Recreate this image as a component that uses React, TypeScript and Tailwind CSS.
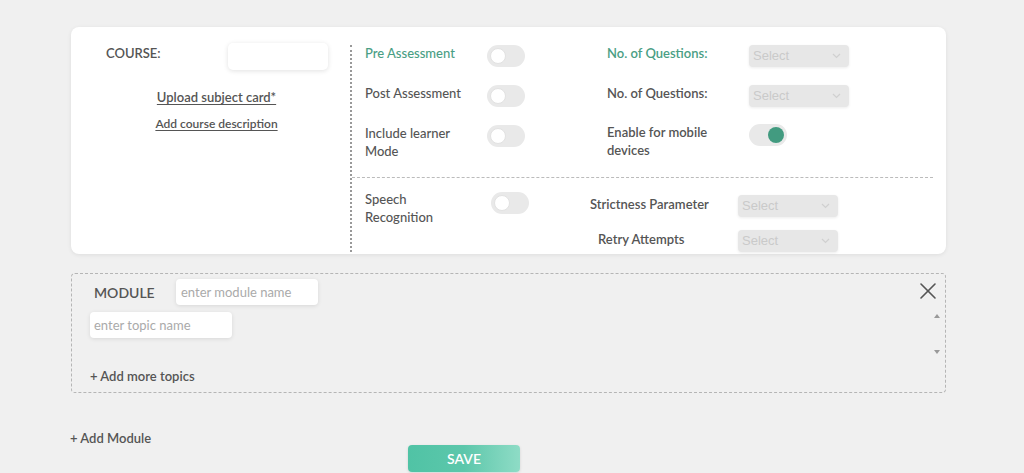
import { X } from "lucide-react";

function Toggle({ on = false }: { on?: boolean }) {
  return (
    <div className="flex h-[22px] w-[38px] shrink-0 items-center rounded-full bg-[#e9e9e9] px-[3px]">
      {on ? (
        <span className="ml-auto h-[16px] w-[16px] rounded-full bg-[#429b80]" />
      ) : (
        <span className="h-[16px] w-[16px] rounded-full border border-[#e2e2e2] bg-white" />
      )}
    </div>
  );
}

function SelectBox() {
  return (
    <div className="flex h-[22px] w-[100px] shrink-0 items-center justify-between rounded-[4px] bg-[#e7e7e7] pl-[4px] pr-[8px] shadow-[0_1px_3px_rgba(0,0,0,0.08)]">
      <span className="font-['Liberation_Sans',Arial,sans-serif] text-[13px] font-normal text-[#cacaca]">Select</span>
      <svg width="9" height="6" viewBox="0 0 9 6" fill="none">
        <path d="M1 1l3.5 3.5L8 1" stroke="#d0d0d0" strokeWidth="1.2" />
      </svg>
    </div>
  );
}

export default function App() {
  return (
    <div className="min-h-[473px] bg-[#f0f0f0] pl-[71px] pr-[78px] pt-[27px] font-['Lato','Noto_Sans',sans-serif] text-[13px] text-[#555]">
      {/* course card */}
      <div className="flex h-[227px] rounded-[8px] bg-white shadow-[0_1px_4px_rgba(0,0,0,0.08)]">
        <div className="w-[279px] shrink-0 pt-[16px]">
          <div className="flex items-start pl-[35px]">
            <span className="mt-[1px] w-[122px] font-semibold leading-[18px]">COURSE:</span>
            <div className="h-[27px] w-[100px] rounded-[5px] bg-white shadow-[0_1px_5px_rgba(0,0,0,0.12)]" />
          </div>
          <div className="mt-[18px] flex flex-col items-center gap-[9px] pl-[12px] font-semibold">
            <a className="underline underline-offset-2 leading-[18px]">Upload subject card*</a>
            <a className="underline underline-offset-2 leading-[18px] text-[12px]">Add course description</a>
          </div>
        </div>

        <div className="mb-[2px] mr-[13px] mt-[18px] flex flex-1 flex-col border-l-[2px] border-dotted border-[#999]">
          <div className="flex border-b border-dashed border-[#bbb] pb-[17px] pl-[13px]">
            <div className="flex w-[242px] flex-col gap-[18px] font-medium">
              <div className="flex items-start">
                <span className="-mt-[1px] w-[122px] leading-[18px] text-[#4a9e84]">Pre Assessment</span>
                <Toggle />
              </div>
              <div className="flex items-start">
                <span className="-mt-[1px] w-[122px] leading-[18px]">Post Assessment</span>
                <Toggle />
              </div>
              <div className="flex items-start">
                <span className="-mt-[1px] w-[122px] leading-[18px]">
                  Include learner
                  <br />
                  Mode
                </span>
                <Toggle />
              </div>
            </div>
            <div className="flex flex-col gap-[18px] font-semibold">
              <div className="flex items-start">
                <span className="-mt-[1px] w-[142px] leading-[18px] text-[#4a9e84]">No. of Questions:</span>
                <SelectBox />
              </div>
              <div className="flex items-start">
                <span className="-mt-[1px] w-[142px] leading-[18px]">No. of Questions:</span>
                <SelectBox />
              </div>
              <div className="-mt-[1px] flex items-start">
                <span className="-mt-[1px] w-[142px] leading-[18px]">
                  Enable for mobile
                  <br />
                  devices
                </span>
                <Toggle on />
              </div>
            </div>
          </div>

          <div className="flex items-start pl-[13px] pt-[12px] font-medium">
            <span className="w-[126px] leading-[18px]">
              Speech
              <br />
              Recognition
            </span>
            <div className="mt-[2px]">
              <Toggle />
            </div>
            <div className="ml-[61px] mt-[5px] flex flex-col gap-[13px] font-semibold">
              <div className="flex items-start">
                <span className="w-[148px] leading-[18px]">Strictness Parameter</span>
                <SelectBox />
              </div>
              <div className="flex items-start">
                <span className="w-[148px] pl-[8px] leading-[18px]">Retry Attempts</span>
                <SelectBox />
              </div>
            </div>
          </div>
        </div>
      </div>

      {/* module box */}
      <div className="relative mt-[19px] h-[120px] rounded-[4px] border border-dashed border-[#b5b5b5] pl-[18px] pt-[5px]">
        <div className="flex items-center">
          <span className="ml-[4px] w-[82px] text-[14px] font-semibold">MODULE</span>
          <input
            placeholder="enter module name"
            className="h-[26px] w-[142px] rounded-[4px] bg-white px-[5px] text-[13px] shadow-[0_1px_4px_rgba(0,0,0,0.1)] outline-none placeholder:text-[#aaa]"
          />
        </div>
        <input
          placeholder="enter topic name"
          className="mt-[7px] h-[26px] w-[142px] rounded-[4px] bg-white px-[4px] text-[13px] shadow-[0_1px_4px_rgba(0,0,0,0.1)] outline-none placeholder:text-[#aaa]"
        />
        <div className="mt-[29px] font-semibold leading-[18px]">+ Add more topics</div>
        <X className="absolute right-[3px] top-[3px] text-[#555]" size={28} strokeWidth={1.4} />
        <span className="absolute right-[5px] top-[40px] h-0 w-0 border-x-[3px] border-b-[4px] border-x-transparent border-b-[#999]" />
        <span className="absolute right-[5px] top-[76px] h-0 w-0 border-x-[3px] border-t-[4px] border-x-transparent border-t-[#999]" />
      </div>

      <div className="mt-[36px] -ml-[1px] font-semibold leading-[18px]">+ Add Module</div>
      <button className="ml-[337px] mt-[-2px] h-[27px] w-[112px] rounded-[4px] bg-gradient-to-r from-[#50c3a5] via-[#5cc7ab] to-[#8edcc6] text-[14px] font-semibold leading-[27px] text-white shadow-[0_1px_3px_rgba(0,0,0,0.12)]">
        SAVE
      </button>
    </div>
  );
}
